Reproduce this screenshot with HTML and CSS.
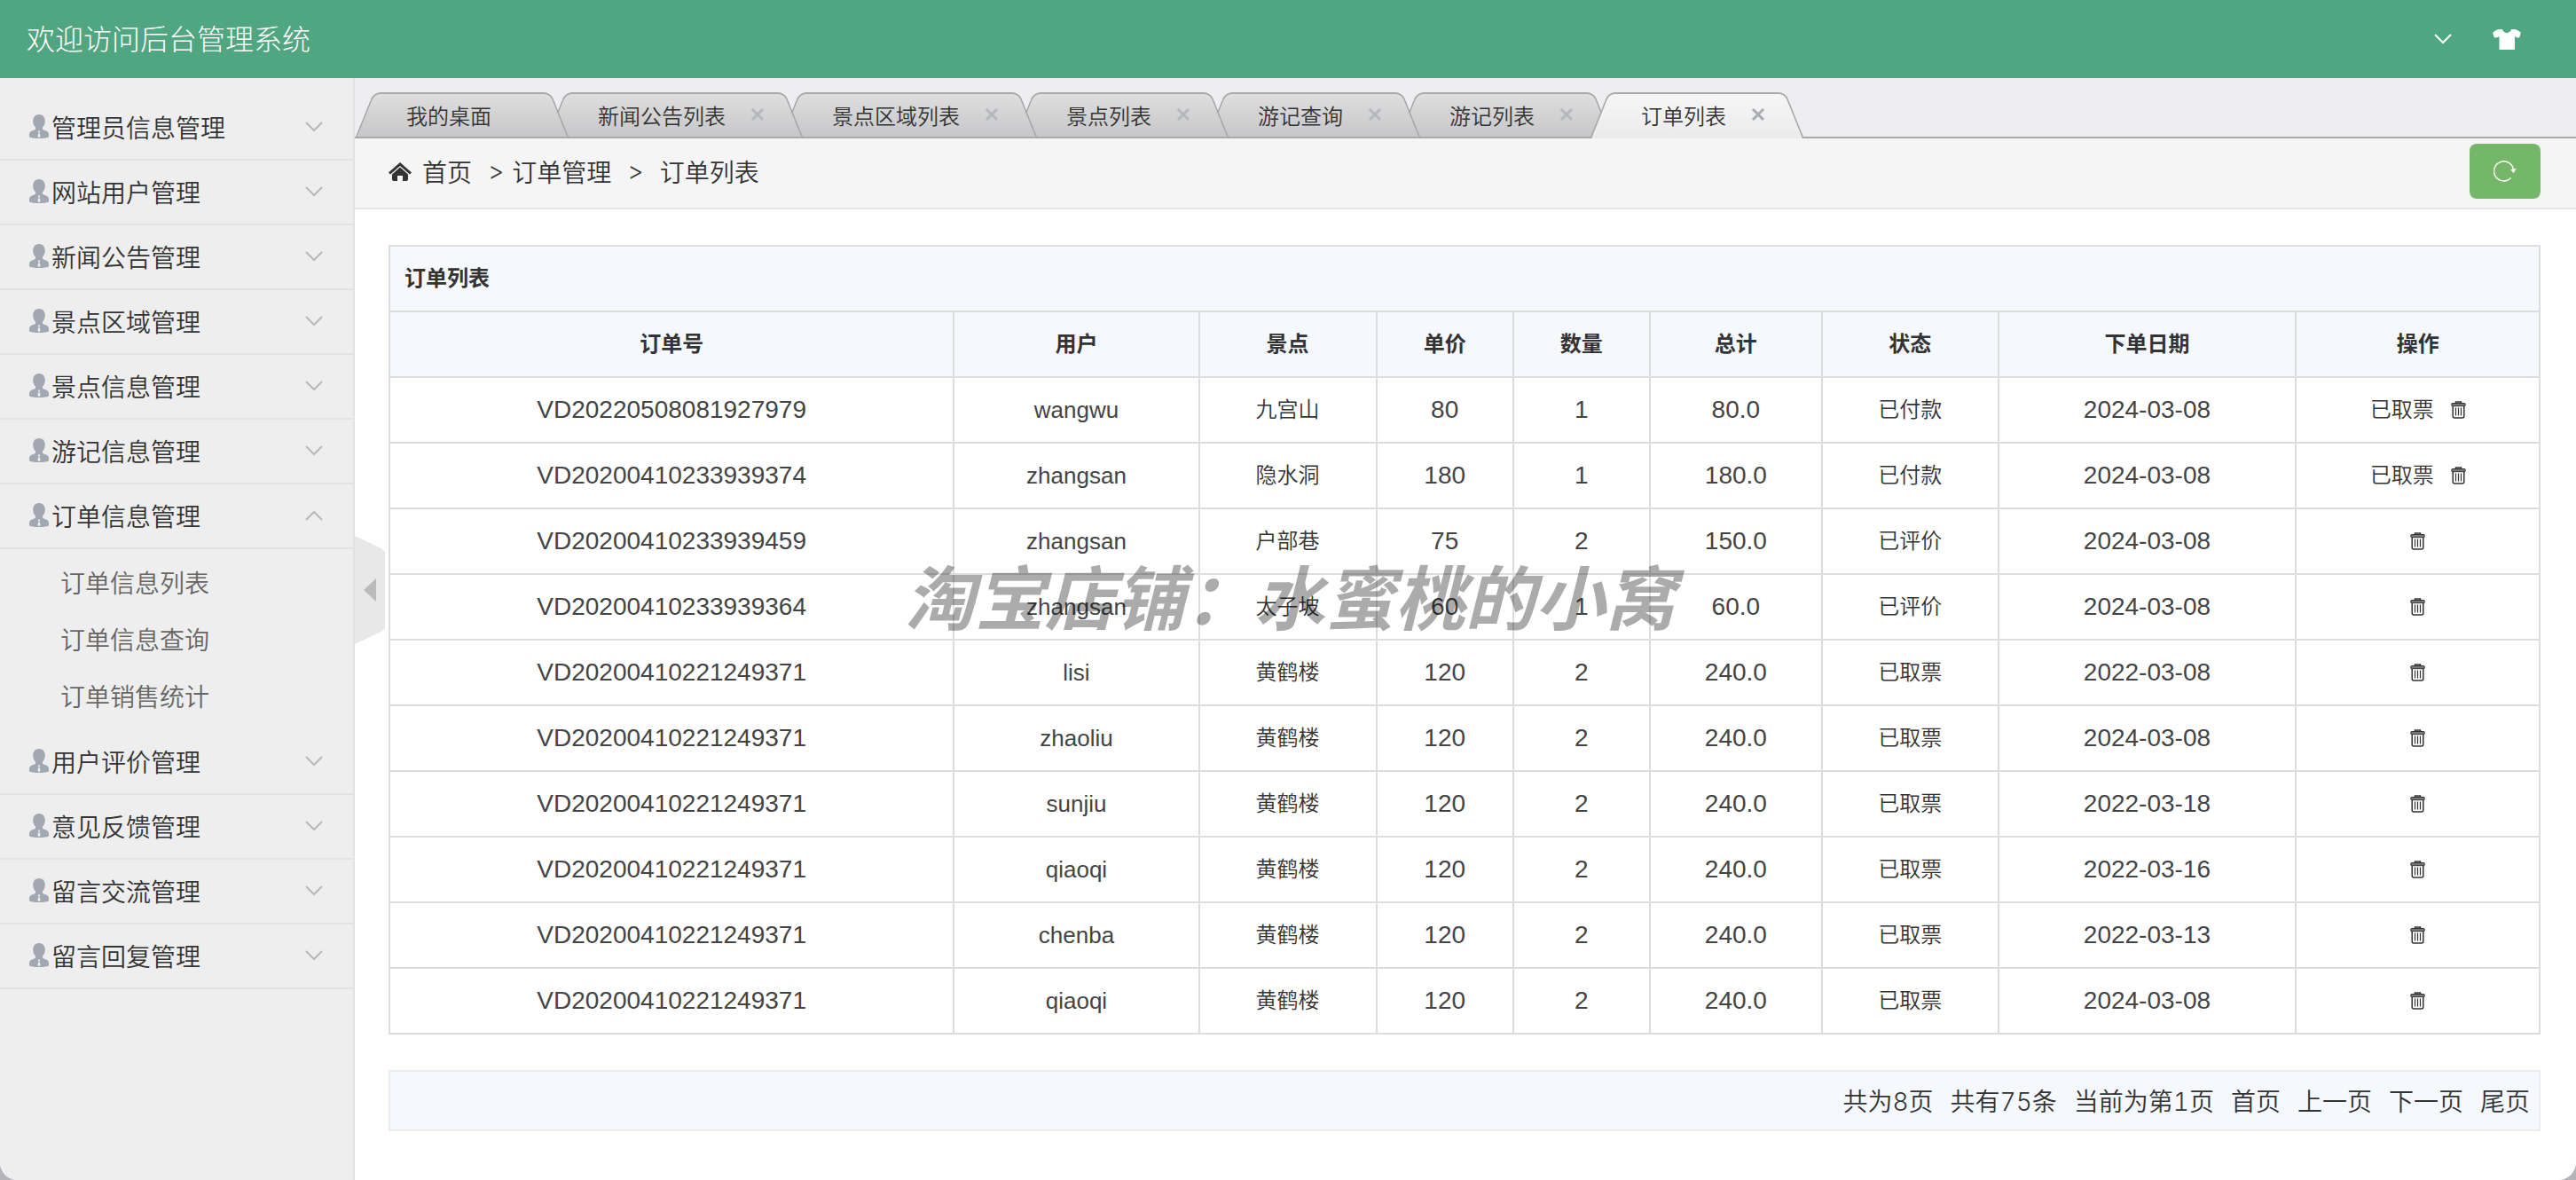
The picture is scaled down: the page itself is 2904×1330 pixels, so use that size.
FILE: index.html
```html
<!DOCTYPE html>
<html lang="zh-CN">
<head>
    <meta charset="UTF-8">
    <title>后台管理系统</title>
    <link rel="stylesheet" href="styles.css">
</head>
<body>
<svg class="sprite">
    <symbol id="i-user" viewBox="0 0 22 27">
        <path d="M11 0C15.300 0 17.800 3 17.800 7.500C17.800 10.500 16.600 13.100 15 14.500V16.500C15.600 17.500 17.200 17.800 19 18.500C21 19.300 22 20.500 22 23V25.500C19 26.500 15 27 11 27S3 26.500 0 25.500V23C0 20.500 1 19.300 3 18.500C4.800 17.800 6.400 17.500 7 16.500V14.500C5.400 13.100 4.200 10.500 4.200 7.500C4.200 3 6.700 0 11 0z"/>
        <path fill="#eee" d="M10 18.500h2v2h-2zM10 21.500h2l.5 3.500-1.500 1-1.500-1z"/>
    </symbol>
    <symbol id="i-down" viewBox="0 0 20 12"><path fill="none" stroke="currentColor" stroke-width="2" d="M1 1l9 9 9-9"/></symbol>
    <symbol id="i-trash" viewBox="0 0 17 20">
        <path fill="none" stroke="currentColor" stroke-width="1.500" d="M5.500 2.500V1h6v1.500"/>
        <rect fill="#777" stroke="currentColor" x=".7" y="2.500" width="15.600" height="3.200" rx="1"/>
        <path fill="none" stroke="currentColor" stroke-width="1.500" d="M2.200 6v11q0 2 2 2h8.600q2 0 2-2V6"/>
        <path fill="none" stroke="currentColor" stroke-width="1.200" d="M5.500 7.500v9M8.500 7.500v9M11.500 7.500v9"/>
    </symbol>
</svg>

<div class="page">
    <header class="topbar">
        <h1>欢迎访问后台管理系统</h1>
        <div class="tools">
            <button aria-label="展开"><svg width="20" height="12"><use href="#i-down"/></svg></button>
            <button aria-label="换肤"><svg width="32" height="23" viewBox="0 0 32 23"><path d="M8 0h3c1 5.500 9 5.500 10 0h3c3 0 6 2 8 4l-2 5.500c-1.500 0-3-.5-5-1.500v15H7.500V8C6 9 4 9.500 2 9.500L0 4c2-2 5-4 8-4z"/></svg></button>
        </div>
    </header>

    <div class="main">
        <nav class="menu" id="menu"></nav>

        <section class="content">
            <div class="tabs" id="tabs"></div>

            <div class="crumb">
                <svg class="home" width="26" height="21" viewBox="0 0 26 21"><path d="M13 0l13 11.500-2 2L13 4 2 13.500l-2-2z"/><path d="M13 5.500l9 8V19q0 2-2 2h-4v-6h-6v6H6q-2 0-2-2v-5.500z"/></svg>
                <a href="#">首页</a>
                <span class="gt">&gt;</span>
                <span>订单管理</span>
                <span class="gt wide">&gt;</span>
                <span>订单列表</span>
                <button class="refresh" aria-label="刷新"><svg width="26" height="24" viewBox="0 0 26 24"><path class="ring" d="M19.500 19.500A11 11 0 1 1 22.500 11"/><path d="M19 10l7-1-3.500 5z"/></svg></button>
            </div>

            <div class="box">
                <table class="orders">
                    <colgroup>
                        <col class="w-no"><col class="w-user"><col class="w-spot"><col class="w-num"><col class="w-num">
                        <col class="w-total"><col class="w-state"><col class="w-date"><col>
                    </colgroup>
                    <thead>
                        <tr><th colspan="9" class="title">订单列表</th></tr>
                        <tr><th>订单号</th><th>用户</th><th>景点</th><th>单价</th><th>数量</th><th>总计</th><th>状态</th><th>下单日期</th><th>操作</th></tr>
                    </thead>
                    <tbody id="rows"></tbody>
                </table>

                <div class="pager">
                    <span>共为8页</span>
                    <span>共有75条</span>
                    <span>当前为第1页</span>
                    <a href="#">首页</a>
                    <a href="#">上一页</a>
                    <a href="#">下一页</a>
                    <a href="#">尾页</a>
                </div>
            </div>
        </section>
    </div>

    <button class="fold" aria-label="收起菜单"><svg width="34" height="122" viewBox="0 0 34 122"><path fill="#e8e8e8" d="M0 0l30 14 4 4v86l-4 4-30 14z"/><path fill="#bbb" d="M10 61l14-13v26z"/></svg></button>
    <div class="watermark">淘宝店铺：水蜜桃的小窝</div>
</div>

<script src="script.js"></script>
</body>
</html>
```

FILE: styles.css
```css
* {
    box-sizing: border-box;
}
body {
    margin: 0;
    background: #b4b4b8;
    color: #333;
    font-family: Inter, "Noto Sans CJK SC", sans-serif;
    font-size: 28px;
    font-weight: 350;
}
button {
    padding: 0;
    border: 0;
    background: none;
    color: inherit;
    font: inherit;
    cursor: pointer;
}
a {
    color: inherit;
    text-decoration: none;
}
svg {
    display: block;
    fill: currentColor;
}
.sprite {
    display: none;
}
.page {
    display: flex;
    flex-direction: column;
    min-height: 100vh;
    border-radius: 0 0 20px 20px;
    background: #fff;
    overflow: hidden;
}

/* top bar */
.topbar {
    display: flex;
    align-items: center;
    justify-content: space-between;
    height: 88px;
    padding: 0 62px 0 30px;
    background: #50a680;
    color: #fff;
}
.topbar h1 {
    margin: 0;
    padding-bottom: 4px;
    font-size: 32px;
    font-weight: 300;
}
.tools {
    display: flex;
    align-items: center;
    gap: 46px;
}
.main {
    display: flex;
    flex: 1;
}

/* left menu */
.menu {
    width: 400px;
    padding-top: 20px;
    border-right: 2px solid #e2e2e2;
    background: #eee;
}
.menu-item {
    display: flex;
    align-items: center;
    width: 100%;
    height: 73px;
    padding: 0 34px 2px 33px;
    border-bottom: 2px solid #e2e2e2;
}
.menu-item .user {
    margin-right: 3px;
    color: #a2a8b2;
}
.menu-item .arrow {
    margin-left: auto;
    color: #b8b8b8;
}
.menu-item.open .arrow {
    transform: rotate(180deg);
}
.submenu {
    margin: 0;
    padding: 7px 0 5px 68px;
    list-style: none;
    line-height: 64px;
    color: #666;
}
.submenu a {
    display: block;
}

/* tabs */
.content {
    flex: 1;
    min-width: 0;
}
.tabs {
    display: flex;
    align-items: flex-end;
    height: 68px;
    border-bottom: 2px solid #a9a9ab;
    background: #eeeef0;
}
.tab {
    position: relative;
    isolation: isolate;
    display: flex;
    align-items: center;
    gap: 28px;
    height: 52px;
    margin: 0 -26px -2px 0;
    padding: 0 44px 2px 58px;
    font-size: 24px;
}
.tab::before,
.tab::after {
    content: "";
    position: absolute;
    z-index: -1;
    top: 0;
    bottom: 0;
    width: 60%;
    border: 2px solid #a9a9ab;
    background: linear-gradient(#dededf, #c7c7c9);
}
.tab::before {
    left: 0;
    border-right: 0;
    border-radius: 8px 0 0 0;
    transform: skewX(-22deg);
    transform-origin: bottom;
}
.tab::after {
    right: 0;
    border-left: 0;
    border-radius: 0 8px 0 0;
    transform: skewX(22deg);
    transform-origin: bottom;
}
.tab.home-tab {
    padding-right: 88px;
}
.tab.active {
    z-index: 20;
}
.tab.active::before,
.tab.active::after {
    border-bottom: 0;
    background: linear-gradient(#f6f6f6, #ebebed);
}
.tab button {
    color: #b4b8bc;
}
.tab.active button {
    color: #a8acb0;
}

/* breadcrumb */
.crumb {
    display: flex;
    align-items: center;
    height: 80px;
    padding: 0 40px 4px 38px;
    border-bottom: 2px solid #e5e5e5;
    background: #f5f5f5;
}
.crumb .home {
    margin-right: 12px;
}
.crumb .gt {
    margin: 0 9px 0 18px;
}
.crumb .wide {
    margin-right: 18px;
}
.refresh {
    display: flex;
    align-items: center;
    justify-content: center;
    width: 80px;
    height: 62px;
    margin-left: auto;
    border-radius: 8px;
    background: #74b769;
    color: #fff;
}
.refresh .ring {
    fill: none;
    stroke: currentColor;
    stroke-width: 1.5;
}

/* order table */
.box {
    padding: 40px 40px 54px 38px;
}
.orders {
    width: 100%;
    table-layout: fixed;
    border-collapse: collapse;
    font-size: 24px;
}
.orders th,
.orders td {
    height: 74px;
    padding: 0 16px;
    border: 2px solid #ddd;
    line-height: 36px;
    text-align: center;
}
.orders th {
    background: #f5f9fe;
    font-weight: 600;
}
.orders .title {
    text-align: left;
}
.orders .number,
.orders .user {
    color: #444;
    font-family: "Liberation Sans", Arial, sans-serif;
    font-size: 28px;
}
.orders .user {
    font-size: 26px;
}
.w-no { width: 26.25%; }
.w-user { width: 11.4%; }
.w-spot { width: 8.25%; }
.w-num { width: 6.36%; }
.w-total { width: 8%; }
.w-state { width: 8.2%; }
.w-date { width: 13.85%; }
.ops {
    display: flex;
    align-items: center;
    justify-content: center;
    gap: 19px;
}

/* pager */
.pager {
    display: flex;
    align-items: center;
    justify-content: flex-end;
    gap: 19px;
    height: 69px;
    margin-top: 40px;
    padding: 0 10px 2px;
    border: 2px solid #ececee;
    background: #f5f9fe;
    font-variant-numeric: tabular-nums;
}

/* floating parts */
.fold {
    position: fixed;
    left: 400px;
    top: 50%;
    transform: translateY(-50%);
}
.watermark {
    position: fixed;
    left: 50%;
    top: 50%;
    padding: 8px 0 0 4px;
    transform: translate(-50%, -50%);
    color: rgba(0, 0, 0, 0.33);
    font-family: "Noto Sans CJK SC", sans-serif;
    font-size: 79px;
    font-style: italic;
    font-weight: 700;
    white-space: nowrap;
    pointer-events: none;
}
```

FILE: script.js
```js
const menu = [
    ['管理员信息管理'],
    ['网站用户管理'],
    ['新闻公告管理'],
    ['景点区域管理'],
    ['景点信息管理'],
    ['游记信息管理'],
    ['订单信息管理', ['订单信息列表', '订单信息查询', '订单销售统计']],
    ['用户评价管理'],
    ['意见反馈管理'],
    ['留言交流管理'],
    ['留言回复管理']
];

const tabs = ['我的桌面', '新闻公告列表', '景点区域列表', '景点列表', '游记查询', '游记列表', '订单列表'];

// 订单号, 用户, 景点, 单价, 数量, 总计, 状态, 下单日期
const orders = [
    ['VD20220508081927979', 'wangwu', '九宫山', '80', '1', '80.0', '已付款', '2024-03-08'],
    ['VD20200410233939374', 'zhangsan', '隐水洞', '180', '1', '180.0', '已付款', '2024-03-08'],
    ['VD20200410233939459', 'zhangsan', '户部巷', '75', '2', '150.0', '已评价', '2024-03-08'],
    ['VD20200410233939364', 'zhangsan', '太子坡', '60', '1', '60.0', '已评价', '2024-03-08'],
    ['VD20200410221249371', 'lisi', '黄鹤楼', '120', '2', '240.0', '已取票', '2022-03-08'],
    ['VD20200410221249371', 'zhaoliu', '黄鹤楼', '120', '2', '240.0', '已取票', '2024-03-08'],
    ['VD20200410221249371', 'sunjiu', '黄鹤楼', '120', '2', '240.0', '已取票', '2022-03-18'],
    ['VD20200410221249371', 'qiaoqi', '黄鹤楼', '120', '2', '240.0', '已取票', '2022-03-16'],
    ['VD20200410221249371', 'chenba', '黄鹤楼', '120', '2', '240.0', '已取票', '2022-03-13'],
    ['VD20200410221249371', 'qiaoqi', '黄鹤楼', '120', '2', '240.0', '已取票', '2024-03-08']
];
const columns = ['number', 'user', 'spot', 'number', 'number', 'number', 'state', 'number'];

document.getElementById('menu').innerHTML = menu.map(([name, children]) => `
    <button class="menu-item ${children ? 'open' : ''}">
        <svg class="user" width="22" height="27"><use href="#i-user"/></svg>${name}
        <svg class="arrow" width="20" height="12"><use href="#i-down"/></svg>
    </button>
    ${children ? '<ul class="submenu">' + children.map(c => `<li><a href="#">${c}</a></li>`).join('') + '</ul>' : ''}
`).join('');

const closeIcon = '<svg width="16" height="16" viewBox="0 0 16 16"><path fill="none" stroke="currentColor" stroke-width="3" d="M2 2l12 12M14 2L2 14"/></svg>';

document.getElementById('tabs').innerHTML = tabs.map((name, i) => {
    const cls = i === 0 ? 'home-tab' : i === tabs.length - 1 ? 'active' : '';
    return `<div class="tab ${cls}">${name}${i ? `<button aria-label="关闭">${closeIcon}</button>` : ''}</div>`;
}).join('');

// each tab lies over the one to its right, the active one over all
document.querySelectorAll('.tab:not(.active)').forEach((tab, i) => {
    tab.style.zIndex = 10 - i;
});

document.getElementById('rows').innerHTML = orders.map(order => {
    const cells = order.map((v, i) => `<td class="${columns[i]}">${v}</td>`).join('');
    const take = order[6] === '已付款' ? '<a href="#">已取票</a>' : '';
    return `<tr>${cells}<td><div class="ops">${take}<button aria-label="删除"><svg width="17" height="20"><use href="#i-trash"/></svg></button></div></td></tr>`;
}).join('');
```
